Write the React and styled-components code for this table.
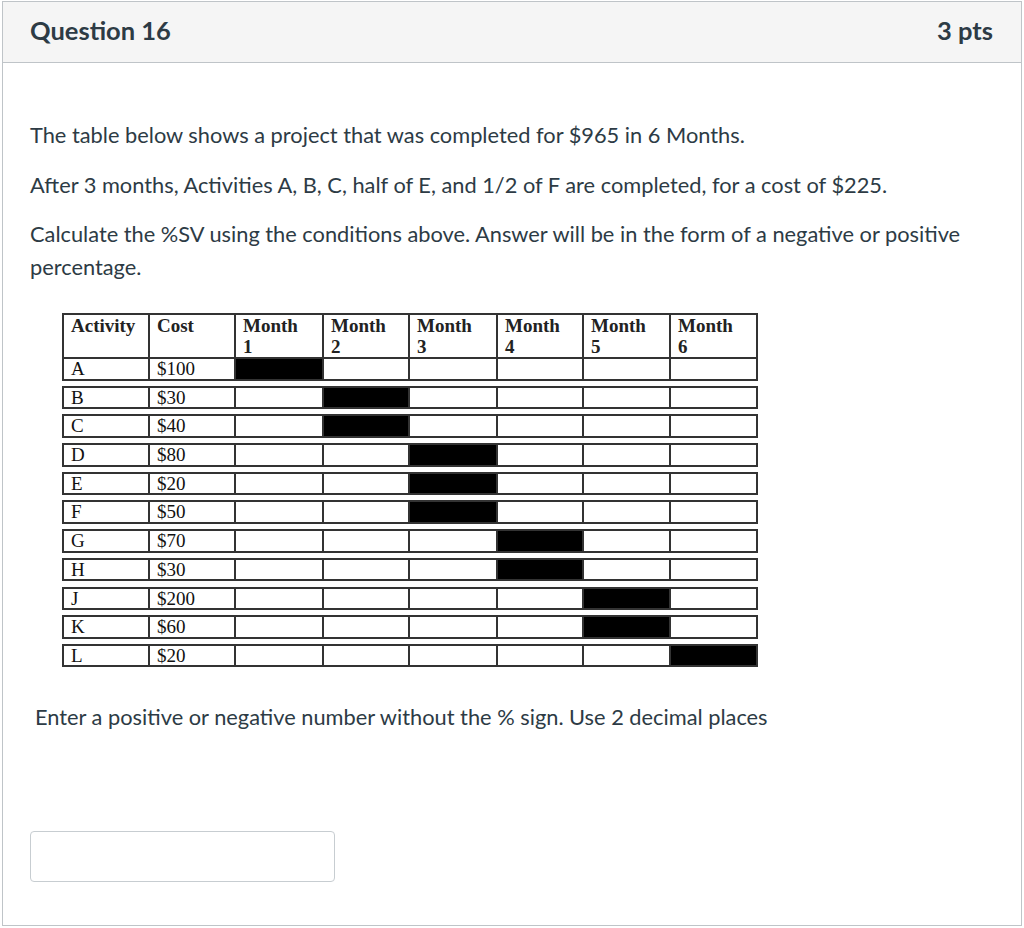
import React from "react";
import styled, { createGlobalStyle } from "styled-components";

const GlobalStyle = createGlobalStyle`
  body {
    margin: 0;
    background: #ffffff;
    font-family: Lato, "Open Sans", sans-serif;
    color: #2d3b45;
  }
`;

const months = [1, 2, 3, 4, 5, 6];

const activities = [
  { name: "A", cost: "$100", month: 1 },
  { name: "B", cost: "$30", month: 2 },
  { name: "C", cost: "$40", month: 2 },
  { name: "D", cost: "$80", month: 3 },
  { name: "E", cost: "$20", month: 3 },
  { name: "F", cost: "$50", month: 3 },
  { name: "G", cost: "$70", month: 4 },
  { name: "H", cost: "$30", month: 4 },
  { name: "J", cost: "$200", month: 5 },
  { name: "K", cost: "$60", month: 5 },
  { name: "L", cost: "$20", month: 6 },
];

const App = () => {
  const [first, ...rest] = activities;
  return (
    <Page>
      <GlobalStyle />
      <QuestionCard>
        <Header>
          <h2>Question 16</h2>
          <span>3 pts</span>
        </Header>
        <Body>
          <p>The table below shows a project that was completed for $965 in 6 Months.</p>
          <p>After 3 months, Activities A, B, C, half of E, and 1/2 of F are completed, for a cost of $225.</p>
          <p>
            Calculate the %SV using the conditions above. Answer will be in the form of a negative or
            positive percentage.
          </p>
          <Schedule>
            <RowBox>
              <HeadRow>
                <Cell>Activity</Cell>
                <Cell>Cost</Cell>
                {months.map((m) => (
                  <Cell key={m}>
                    Month
                    <br />
                    {m}
                  </Cell>
                ))}
              </HeadRow>
              <DataRow $top>
                <Cell>{first.name}</Cell>
                <Cell>{first.cost}</Cell>
                {months.map((m) => (
                  <Cell key={m} $filled={m === first.month} />
                ))}
              </DataRow>
            </RowBox>
            {rest.map((a) => (
              <RowBox key={a.name} $gap>
                <DataRow>
                  <Cell>{a.name}</Cell>
                  <Cell>{a.cost}</Cell>
                  {months.map((m) => (
                    <Cell key={m} $filled={m === a.month} />
                  ))}
                </DataRow>
              </RowBox>
            ))}
          </Schedule>
          <Instruction>Enter a positive or negative number without the % sign. Use 2 decimal places</Instruction>
          <AnswerInput type="text" />
        </Body>
      </QuestionCard>
    </Page>
  );
};

const Page = styled.div`
  padding: 1px 2px 2px 2px;
`;

const QuestionCard = styled.div`
  border: 1px solid #bfc4c8;
  background: #ffffff;
  height: 925px;
  box-sizing: border-box;
`;

const Header = styled.div`
  display: flex;
  justify-content: space-between;
  align-items: center;
  height: 61px;
  padding: 0 28px 4px 27px;
  box-sizing: border-box;
  background: #f5f5f5;
  border-bottom: 1px solid #bfc4c8;
  h2,
  span {
    margin: 0;
    font-size: 25.5px;
    font-weight: 700;
    color: #2d3b45;
  }
`;

const Body = styled.div`
  padding: 55px 30px 0 27px;
  p {
    margin: 0 0 16.5px 0;
    font-size: 21.8px;
    line-height: 33px;
  }
`;

const Schedule = styled.div`
  margin: 30px 0 0 32px;
  width: 696px;
  font-family: "Liberation Serif", "Times New Roman", serif;
  color: #111;
`;

const RowBox = styled.div`
  border: 2px solid #333;
  margin-top: ${(p) => (p.$gap ? "5.2px" : "0")};
`;

const columns = "86px 86px 88px 86px 88px 86px 87px 85px";

const HeadRow = styled.div`
  display: grid;
  grid-template-columns: ${columns};
  height: 42px;
  font-weight: 700;
  font-size: 19px;
  line-height: 21px;
  color: #222;
`;

const DataRow = styled.div`
  display: grid;
  grid-template-columns: ${columns};
  height: 19.5px;
  font-size: 19px;
  line-height: 19.5px;
  border-top: ${(p) => (p.$top ? "2px solid #333" : "none")};
`;

const Cell = styled.div`
  padding: 0 0 0 7px;
  border-right: 2px solid #333;
  background: ${(p) => (p.$filled ? "#000" : "transparent")};
  &:last-child {
    border-right: none;
  }
`;

const Instruction = styled.div`
  margin: 33px 0 0 5px;
  font-size: 21.8px;
  line-height: 33px;
`;

const AnswerInput = styled.input`
  display: block;
  margin: 98px 0 0 0;
  width: 305px;
  height: 51px;
  box-sizing: border-box;
  border: 1px solid #c7cdd1;
  border-radius: 4px;
  background: #fff;
`;

export default App;
